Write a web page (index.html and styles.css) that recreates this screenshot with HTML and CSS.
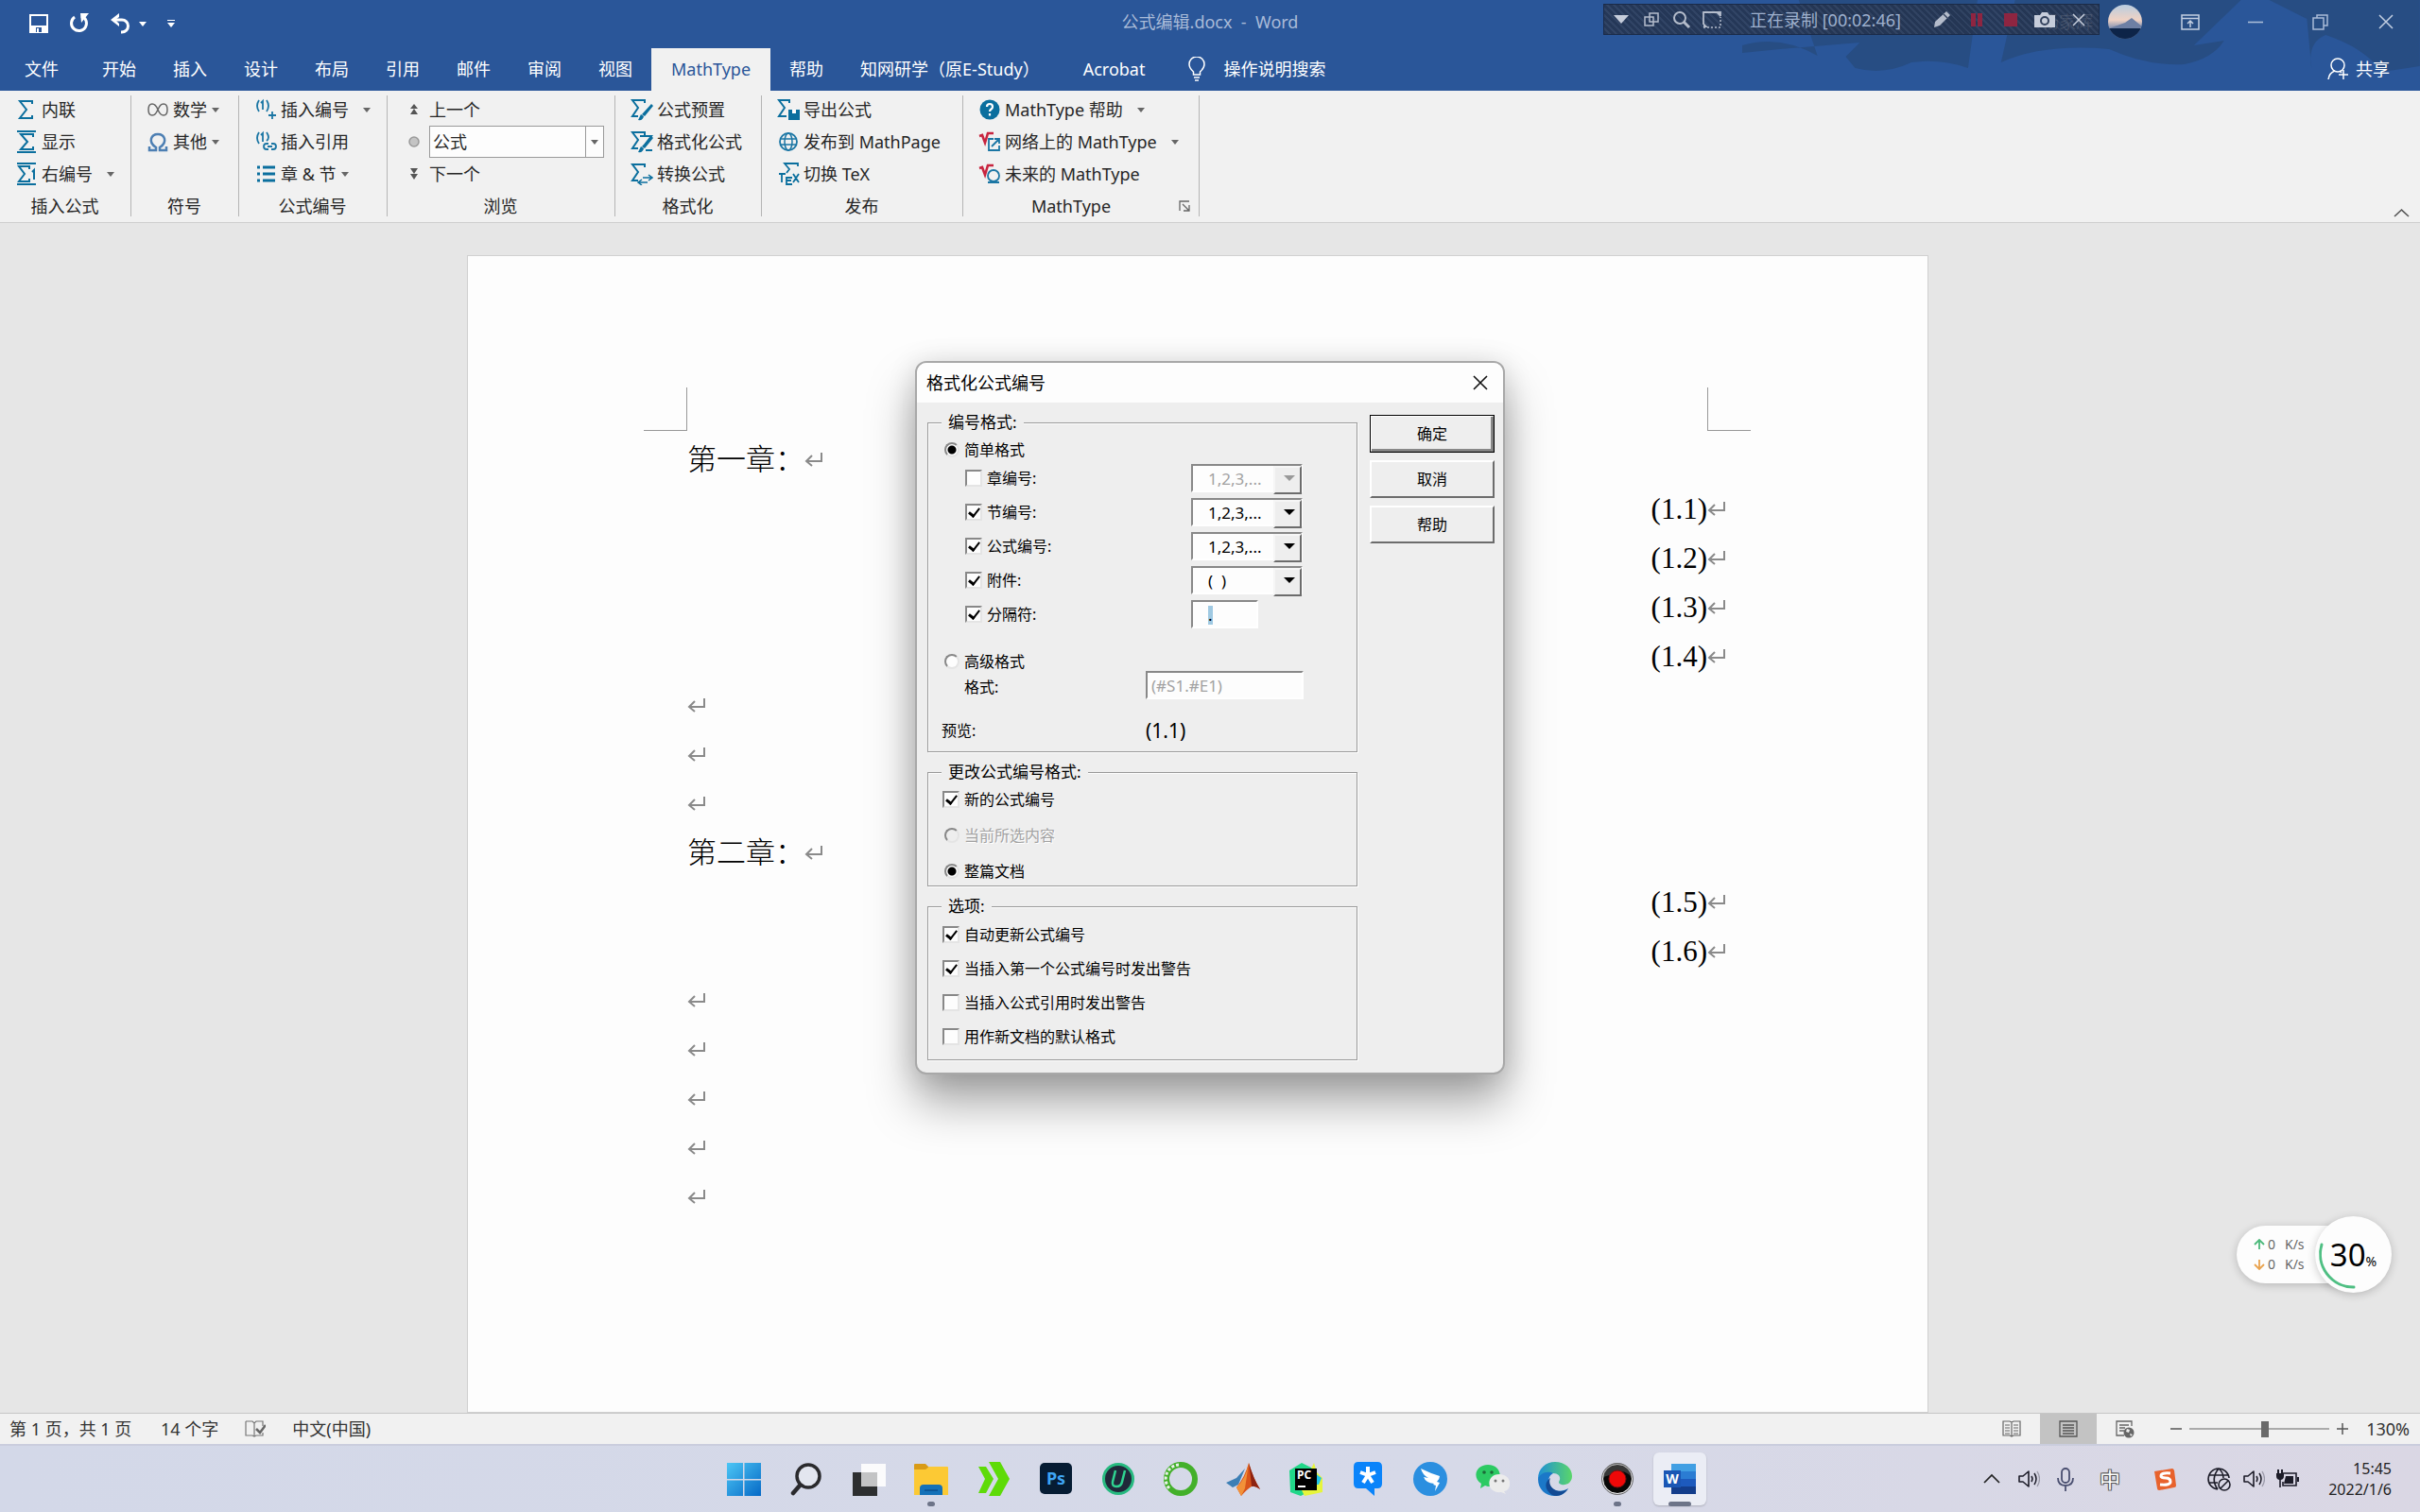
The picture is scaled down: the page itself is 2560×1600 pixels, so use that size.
FILE: index.html
```html
<!DOCTYPE html>
<html lang="zh-CN">
<head>
  <meta charset="UTF-8" />
  <meta name="viewport" content="width=device-width, initial-scale=1.0" />
  <title>公式编辑.docx - Word</title>
  <link rel="stylesheet" href="styles.css">
</head>
<body>
  <svg class="defs" aria-hidden="true">
    <symbol id="sigma" viewBox="0 0 24 24"><path d="M18 6V3H5l7 9-7 9h13v-3" fill="none" stroke="#0b6f9e" stroke-width="2"/></symbol>
    <symbol id="return" viewBox="0 0 20 16"><path d="M18 0v9H2M8 3L2 9l6 5" fill="none" stroke="#8a8a8a" stroke-width="2"/></symbol>
    <symbol id="speaker" viewBox="0 0 24 24"><path d="M2 9v6h4l6 5V4L6 9z" fill="none" stroke="#1c1c28" stroke-width="1.6" stroke-linejoin="round"/><path d="M15 9q2 3 0 6M18 6q4 6 0 12" fill="none" stroke="#1c1c28" stroke-width="1.5"/><path d="M21 4q5 8 0 16" fill="none" stroke="#9a9aa8" stroke-width="1.3"/></symbol>
    <symbol id="root" viewBox="0 0 24 24"><path d="M1 6l3-1 3 8 3-10h6" fill="none" stroke="#c8253f" stroke-width="2.6"/></symbol>
  </svg>

  <header class="top">
    <svg class="clouds" viewBox="0 0 720 96" preserveAspectRatio="none" aria-hidden="true">
      <path d="M0 48Q40 36 80 59L60 0H250L240 72Q210 62 180 66Q150 80 120 72L110 60L125 45L40 52L0 56zM275 66Q320 46 390 52Q430 70 470 68Q500 62 512 43L480 48L530 0H290zM605 72Q600 45 620 37Q660 50 680 76L720 70V0H560L600 20z" fill="#274d83"/>
    </svg>
    <div class="title-row">
      <div class="quick">
        <button aria-label="保存"><svg width="20" height="20" viewBox="0 0 20 20"><path d="M1 1h18v18H1z" fill="none" stroke="#fff" stroke-width="2"/><path d="M1 12h18v7H1z" fill="#fff"/><path d="M7 14h6v5H7z" fill="#2a5699"/><path d="M8 15h2v4H8z" fill="#fff"/></svg></button>
        <button aria-label="重复"><svg width="22" height="22" viewBox="0 0 22 22"><path d="M13 3A8 8 0 1 1 6 4" fill="none" stroke="#fff" stroke-width="3"/><path d="M12 0h9l-8 10z" fill="#fff"/></svg></button>
        <button aria-label="撤消"><svg width="22" height="22" viewBox="0 0 22 22"><path d="M4 7h8a6.500 6.500 0 0 1 0 13h-1" fill="none" stroke="#fff" stroke-width="3"/><path d="M9 0v4L5 7l4 4v3L0 7z" fill="#fff"/></svg><i class="caret light"></i></button>
        <button class="customize" aria-label="自定义快速访问工具栏"><i class="bar"></i><i class="caret light"></i></button>
      </div>
      <div class="doc-name">公式编辑.docx&nbsp; - &nbsp;Word</div>
      <div class="window-side">
        <span class="user">杨家辉</span>
        <svg class="avatar" width="36" height="36" viewBox="0 0 36 36"><defs><linearGradient id="sky" x1="0" y1="0" x2="0" y2="1"><stop offset="0" stop-color="#b9cde0"/><stop offset=".45" stop-color="#f0d2c4"/><stop offset=".7" stop-color="#7f8fb0"/></linearGradient><clipPath id="round"><circle cx="18" cy="18" r="18"/></clipPath></defs><g clip-path="url(#round)"><path d="M0 0h36v36H0z" fill="url(#sky)"/><path d="M4 24l14-5 7-5 11 9v4H0z" fill="#6d7fa4"/><path d="M0 25h36v11H0z" fill="#0d2448"/></g></svg>
        <div class="window-buttons">
          <button aria-label="功能区显示选项"><svg width="20" height="17" viewBox="0 0 20 17"><path d="M1 1h18v15H1zM1 4.500h18M10 14V7M7 10l3-3 3 3" fill="none" stroke="#c3cfe2" stroke-width="1.500"/></svg></button>
          <button aria-label="最小化"><svg width="16" height="16" viewBox="0 0 16 16"><path d="M0 8.500h16" stroke="#a9bbd8" stroke-width="1.600"/></svg></button>
          <button aria-label="还原"><svg width="17" height="17" viewBox="0 0 17 17"><path d="M1 4h11v12H1zM5 4V1h11v11h-4" fill="none" stroke="#a9bbd8" stroke-width="1.500"/></svg></button>
          <button aria-label="关闭"><svg width="16" height="16" viewBox="0 0 16 16"><path d="M1 1l14 14M15 1L1 15" stroke="#c3cfe2" stroke-width="1.500"/></svg></button>
        </div>
      </div>
    </div>
    <nav class="tabs">
      <button class="file">文件</button>
      <button>开始</button>
      <button>插入</button>
      <button>设计</button>
      <button>布局</button>
      <button>引用</button>
      <button>邮件</button>
      <button>审阅</button>
      <button>视图</button>
      <button class="active">MathType</button>
      <button>帮助</button>
      <button>知网研学（原E-Study）</button>
      <button class="wide">Acrobat</button>
      <button class="tell-me"><svg width="18" height="26" viewBox="0 0 18 26"><path d="M5.500 19v-3Q1 12 1 8a8 8 0 0 1 16 0q0 4-4.500 8v3zM6 22h6M7 25h4" fill="none" stroke="#fff" stroke-width="1.500"/></svg>操作说明搜索</button>
      <button class="share"><svg width="23" height="24" viewBox="0 0 23 24"><circle cx="11" cy="8" r="7" fill="none" stroke="#fff" stroke-width="1.500"/><path d="M1 23q1-7 7-9M13 14l2 2M17 13v10M12 18h10" fill="none" stroke="#fff" stroke-width="1.500"/></svg>共享</button>
    </nav>
  </header>

  <section class="recorder" aria-label="录制">
    <button aria-label="菜单"><svg width="16" height="9"><path d="M0 0h16L8 9z" fill="#c6cddb"/></svg></button>
    <button aria-label="窗口"><svg width="16" height="16" viewBox="0 0 16 16"><path d="M6 1h9v9H6zM1 5h9v9H1z" fill="none" stroke="#b4bccb" stroke-width="1.500"/></svg></button>
    <button aria-label="放大"><svg width="20" height="20" viewBox="0 0 20 20"><circle cx="8" cy="8" r="6" fill="none" stroke="#b4bccb" stroke-width="2"/><path d="M12 12l6 6" stroke="#b4bccb" stroke-width="3"/></svg></button>
    <button aria-label="区域"><svg width="20" height="18" viewBox="0 0 20 18"><path d="M1 14V1h13M14 1h5v4" fill="none" stroke="#b4bccb" stroke-width="1.800"/><path d="M1 17h18V6" fill="none" stroke="#b4bccb" stroke-width="1.500" stroke-dasharray="2 2"/><path d="M1 12v5h5zM19 1v5l-5-5z" fill="#b4bccb"/></svg></button>
    <span>正在录制 [00:02:46]</span>
    <button aria-label="画笔"><svg width="20" height="20" viewBox="0 0 20 20"><path d="M1 18l1-6L14 1l4 4L7 16z" fill="#b4bccb"/><path d="M11 4l4 4" stroke="#33425e" stroke-width="1.500"/></svg></button>
    <button aria-label="暂停"><svg width="12" height="14"><path d="M0 0h5v14H0zM7 0h5v14H7z" fill="#8e2541"/></svg></button>
    <button aria-label="停止"><svg width="14" height="14"><path d="M0 0h14v14H0z" fill="#8e2541"/></svg></button>
    <button aria-label="截图"><svg width="22" height="16" viewBox="0 0 22 16"><path d="M0 3h6l2-3h6l2 3h6v13H0z" fill="#c6cddb"/><circle cx="11" cy="9" r="4" fill="none" stroke="#33425e" stroke-width="2"/></svg></button>
    <button aria-label="关闭录制"><svg width="14" height="14" viewBox="0 0 14 14"><path d="M1 1l12 12M13 1L1 13" stroke="#c6cddb" stroke-width="1.500"/></svg></button>
  </section>

  <section class="ribbon">
    <div class="group">
      <button><svg class="icon"><use href="#sigma"/></svg>内联</button>
      <button><svg class="icon" viewBox="0 0 24 24"><path d="M2 1h20M2 23h20M19 7V4H6l7 8-7 8h13v-3" fill="none" stroke="#0b6f9e" stroke-width="2"/></svg>显示</button>
      <button><svg class="icon" viewBox="0 0 24 24"><path d="M2 1h20M2 23h20M15 7V4H4l6 8-6 8h11v-3M18 10l2-2v10" fill="none" stroke="#0b6f9e" stroke-width="2"/></svg>右编号<i class="caret far"></i></button>
      <div class="label">插入公式</div>
    </div>
    <div class="group">
      <button><svg class="icon" viewBox="0 0 24 24"><path d="M12 12C10 7 8 6 6 6q-4 0-4 6t4 6c3 0 4-2 6-6s3-6 6-6q4 0 4 6t-4 6c-2 0-4-1-6-6z" fill="none" stroke="#666" stroke-width="1.500"/></svg>数学<i class="caret"></i></button>
      <button><svg class="icon" viewBox="0 0 24 24"><path d="M3 17v4h7v-3C1 12 5 4 12 4s11 8 2 14v3h7v-4" fill="none" stroke="#4d7fb3" stroke-width="2.500"/></svg>其他<i class="caret"></i></button>
      <div class="label">符号</div>
    </div>
    <div class="group">
      <button><svg class="icon" viewBox="0 0 24 24"><path d="M5 2q-4 6 0 12M13 2q4 6 0 12M7 5l2-2v9M19 14v8M15 18h8" fill="none" stroke="#1b76a4" stroke-width="1.800"/></svg>插入编号<i class="caret far"></i></button>
      <button><svg class="icon" viewBox="0 0 24 24"><path d="M5 2q-4 6 0 12M13 2q4 6 0 9M7 5l2-2v9" fill="none" stroke="#1b76a4" stroke-width="1.800"/><path d="M15 20h-2a3 3 0 0 1 0-6h2M18 14h2a3 3 0 0 1 0 6h-2M14 17h5" fill="none" stroke="#1b76a4" stroke-width="1.800"/></svg>插入引用</button>
      <button><svg class="icon" viewBox="0 0 24 24"><path d="M3 5h3M3 12h3M3 19h3M9 5h13M9 12h13M9 19h13" stroke="#0b6f9e" stroke-width="3"/></svg>章 &amp; 节<i class="caret"></i></button>
      <div class="label">公式编号</div>
    </div>
    <div class="group">
      <button><svg class="icon" viewBox="0 0 24 24"><path d="M12 6l4 5H8zM12 11l4 6H8z" fill="#555"/></svg>上一个</button>
      <div class="browse">
        <svg class="icon" viewBox="0 0 24 24"><circle cx="12" cy="12" r="5" fill="#c4c4c4" stroke="#999" stroke-width="1.500"/></svg>
        <div class="combo">
          <select aria-label="浏览对象"><option>公式</option></select>
        </div>
      </div>
      <button><svg class="icon" viewBox="0 0 24 24"><path d="M8 6h8l-4 6zM8 12h8l-4 6z" fill="#555"/></svg>下一个</button>
      <div class="label">浏览</div>
    </div>
    <div class="group">
      <button><svg class="icon" viewBox="0 0 24 24"><path d="M15 5V2H2l6 8-6 9h6" fill="none" stroke="#0b6f9e" stroke-width="2"/><path d="M22 6l2 2-9 11-3-2zM11 17l3 2q-1 5-6 4z" fill="#0b6f9e"/></svg>公式预置</button>
      <button><svg class="icon" viewBox="0 0 24 24"><path d="M15 5V2H2l6 8-6 9h6M10 6h12l-6 8M16 21h7" fill="none" stroke="#0b6f9e" stroke-width="2"/><path d="M22 6l2 2-9 11-3-2zM11 17l3 2q-1 5-6 4z" fill="#0b6f9e"/></svg>格式化公式</button>
      <button><svg class="icon" viewBox="0 0 24 24"><path d="M15 5V2H2l6 8-6 9h6" fill="none" stroke="#0b6f9e" stroke-width="2"/><path d="M13 16h9M19 13l4 3-4 3M18 21H9M12 18l-4 3 4 3" fill="none" stroke="#0b6f9e" stroke-width="1.500"/></svg>转换公式</button>
      <div class="label">格式化</div>
    </div>
    <div class="group">
      <button><svg class="icon" viewBox="0 0 24 24"><path d="M13 5V2H2l6 8-6 9h8" fill="none" stroke="#0b6f9e" stroke-width="2"/><path d="M12 12h12v11H12z" fill="#0b6f9e"/><path d="M16 12h4v4h-4z" fill="#fff"/></svg>导出公式</button>
      <button><svg class="icon" viewBox="0 0 24 24"><circle cx="12" cy="12" r="9" fill="none" stroke="#1b76a4" stroke-width="1.800"/><ellipse cx="12" cy="12" rx="4" ry="9" fill="none" stroke="#1b76a4" stroke-width="1.500"/><path d="M3 9h18M3 15h18" stroke="#1b76a4" stroke-width="1.500"/></svg>发布到 MathPage</button>
      <button><svg class="icon" viewBox="0 0 24 24"><path d="M22 4V1H8l5 6-3 4M2 12h7M5 12v9M16 16h-6v7h6M10 19h5M17 12l6 9M23 12l-6 9" fill="none" stroke="#0b6f9e" stroke-width="1.800"/></svg>切换 TeX</button>
      <div class="label">发布</div>
    </div>
    <div class="group">
      <button><svg class="icon" viewBox="0 0 24 24"><circle cx="12" cy="12" r="10.500" fill="#0b6f9e"/><path d="M9 9q0-3 3-3t3 3q0 1.500-1.500 2.500T12 14M12 16v2.500" fill="none" stroke="#fff" stroke-width="2.200"/></svg>MathType 帮助<i class="caret far"></i></button>
      <button><svg class="icon" viewBox="0 0 24 24"><use href="#root"/><path d="M16 9h-5v12h11v-5M14 17l7-7M17 9h5v5" fill="none" stroke="#1b76a4" stroke-width="1.800"/></svg>网络上的 MathType<i class="caret far"></i></button>
      <button><svg class="icon" viewBox="0 0 24 24"><use href="#root"/><circle cx="16" cy="14" r="6" fill="#f1f1f1" stroke="#1b76a4" stroke-width="1.800"/><path d="M10 21h12" stroke="#1b76a4" stroke-width="2"/></svg>未来的 MathType</button>
      <div class="label"><span>MathType</span><button class="launcher" aria-label="MathType 选项"><svg width="12" height="12" viewBox="0 0 12 12"><path d="M1 11V1h10M4 4l7 7M11 5v6H5" fill="none" stroke="#666" stroke-width="1.300"/></svg></button></div>
    </div>
    <button class="collapse" aria-label="折叠功能区"><svg width="17" height="10" viewBox="0 0 17 10"><path d="M1 9l7.500-7L16 9" fill="none" stroke="#555" stroke-width="1.600"/></svg></button>
  </section>

  <main class="workspace">
    <article class="page">
      <i class="crop left"></i>
      <i class="crop right"></i>
      <p>第一章：<svg class="mark"><use href="#return"/></svg></p>
      <p class="number">(1.1)<svg class="mark"><use href="#return"/></svg></p>
      <p class="number">(1.2)<svg class="mark"><use href="#return"/></svg></p>
      <p class="number">(1.3)<svg class="mark"><use href="#return"/></svg></p>
      <p class="number">(1.4)<svg class="mark"><use href="#return"/></svg></p>
      <p><svg class="mark"><use href="#return"/></svg></p>
      <p><svg class="mark"><use href="#return"/></svg></p>
      <p><svg class="mark"><use href="#return"/></svg></p>
      <p>第二章：<svg class="mark"><use href="#return"/></svg></p>
      <p class="number">(1.5)<svg class="mark"><use href="#return"/></svg></p>
      <p class="number">(1.6)<svg class="mark"><use href="#return"/></svg></p>
      <p><svg class="mark"><use href="#return"/></svg></p>
      <p><svg class="mark"><use href="#return"/></svg></p>
      <p><svg class="mark"><use href="#return"/></svg></p>
      <p><svg class="mark"><use href="#return"/></svg></p>
      <p><svg class="mark"><use href="#return"/></svg></p>
    </article>
  </main>

  <form class="dialog" role="dialog" aria-labelledby="dialogTitle">
    <div class="dialog-title">
      <span id="dialogTitle">格式化公式编号</span>
      <button type="button" aria-label="关闭"><svg width="16" height="16" viewBox="0 0 16 16"><path d="M1 1l14 14M15 1L1 15" stroke="#111" stroke-width="1.600"/></svg></button>
    </div>
    <div class="dialog-body">
      <div class="fields">
        <fieldset class="format">
          <legend>编号格式:</legend>
          <label class="mode"><input type="radio" name="mode" checked />简单格式</label>
          <div class="row">
            <label><input type="checkbox" />章编号:</label>
            <div class="drop disabled"><select aria-label="章编号格式" disabled><option>1,2,3,...</option></select></div>
          </div>
          <div class="row">
            <label><input type="checkbox" checked />节编号:</label>
            <div class="drop"><select aria-label="节编号格式"><option>1,2,3,...</option></select></div>
          </div>
          <div class="row">
            <label><input type="checkbox" checked />公式编号:</label>
            <div class="drop"><select aria-label="公式编号格式"><option>1,2,3,...</option></select></div>
          </div>
          <div class="row">
            <label><input type="checkbox" checked />附件:</label>
            <div class="drop"><select aria-label="附件格式"><option>(&nbsp; )</option></select></div>
          </div>
          <div class="row">
            <label><input type="checkbox" checked />分隔符:</label>
            <input class="separator" type="text" value="." aria-label="分隔符文本" />
          </div>
          <label class="mode advanced"><input type="radio" name="mode" />高级格式</label>
          <div class="pair">
            <label class="indent" for="pattern">格式:</label>
            <input class="pattern" id="pattern" type="text" value="(#S1.#E1)" disabled />
          </div>
          <div class="pair preview">
            <span>预览:</span>
            <output>(1.1)</output>
          </div>
        </fieldset>
        <fieldset class="change">
          <legend>更改公式编号格式:</legend>
          <label><input type="checkbox" checked />新的公式编号</label>
          <label class="off"><input type="radio" name="scope" disabled />当前所选内容</label>
          <label><input type="radio" name="scope" checked />整篇文档</label>
        </fieldset>
        <fieldset class="options">
          <legend>选项:</legend>
          <label><input type="checkbox" checked />自动更新公式编号</label>
          <label><input type="checkbox" checked />当插入第一个公式编号时发出警告</label>
          <label><input type="checkbox" />当插入公式引用时发出警告</label>
          <label><input type="checkbox" />用作新文档的默认格式</label>
        </fieldset>
      </div>
      <div class="actions">
        <button type="button" class="default">确定</button>
        <button type="button">取消</button>
        <button type="button">帮助</button>
      </div>
    </div>
  </form>

  <aside class="monitor">
    <div class="speed">
      <div><svg width="12" height="12" viewBox="0 0 12 12"><path d="M6 11V1M1 6l5-5 5 5" fill="none" stroke="#4cb97a" stroke-width="1.800"/></svg><span>0</span><span>K/s</span></div>
      <div><svg width="12" height="12" viewBox="0 0 12 12"><path d="M6 1v10M1 6l5 5 5-5" fill="none" stroke="#e9a24d" stroke-width="1.800"/></svg><span>0</span><span>K/s</span></div>
    </div>
    <div class="gauge">
      <svg width="81" height="81" viewBox="0 0 81 81"><path d="M7 30A35 35 0 0 0 41 75" fill="none" stroke="#4fbf83" stroke-width="3" stroke-linecap="round"/></svg>
      <b>30</b><small>%</small>
    </div>
  </aside>

  <footer class="status">
    <span class="pages">第 1 页，共 1 页</span>
    <span>14 个字</span>
    <button aria-label="校对"><svg width="22" height="18" viewBox="0 0 22 18"><path d="M1 1h7l2 2 2-2h7v5M10 3v14M1 1v15h7l2 1 2-1h7v-3" fill="none" stroke="#777" stroke-width="1.200"/><path d="M12 9l4 4 6-8" fill="none" stroke="#666" stroke-width="2.500"/></svg></button>
    <span>中文(中国)</span>
    <div class="views">
      <button aria-label="阅读视图"><svg width="20" height="18" viewBox="0 0 20 18"><path d="M1 1h7l2 1 2-1h7v15h-7l-2 1-2-1H1zM10 2v15M3 5h5M3 8h5M3 11h5M3 14h5M12 5h5M12 8h5M12 11h5M12 14h5" fill="none" stroke="#666" stroke-width="1.200"/></svg></button>
      <button class="current" aria-label="页面视图"><svg width="20" height="18" viewBox="0 0 20 18"><path d="M1 1h18v16H1zM4 5h12M4 8h12M4 11h12M4 14h12" fill="none" stroke="#555" stroke-width="1.300"/></svg></button>
      <button aria-label="Web 版式视图"><svg width="20" height="19" viewBox="0 0 20 19"><path d="M17 6V1H1v15h8M4 5h10M4 8h6M4 11h5" fill="none" stroke="#666" stroke-width="1.300"/><circle cx="14" cy="13" r="5.500" fill="#666"/><path d="M12 9l3 1-1 3-3-1zM15 14l3 1-2 2z" fill="#eee"/></svg></button>
    </div>
    <div class="zoom">
      <button aria-label="缩小"><svg width="12" height="12"><path d="M0 6h12" stroke="#555" stroke-width="1.500"/></svg></button>
      <input type="range" min="0" max="100" value="54" aria-label="显示比例" />
      <button aria-label="放大"><svg width="12" height="12"><path d="M0 6h12M6 0v12" stroke="#555" stroke-width="1.500"/></svg></button>
      <span>130%</span>
    </div>
  </footer>

  <footer class="taskbar">
    <div></div>
    <div class="apps">
      <button aria-label="开始"><svg viewBox="0 0 36 36"><defs><linearGradient id="win" x1="0" y1="0" x2="1" y2="1"><stop offset="0" stop-color="#4cc6f5"/><stop offset="1" stop-color="#0669c6"/></linearGradient></defs><path d="M0 1h17v17H0zM18.500 1H36v17H18.500zM0 19.500h17V36H0zM18.500 19.500H36V36H18.500z" fill="url(#win)"/></svg></button>
      <button aria-label="搜索"><svg viewBox="0 0 36 36"><circle cx="20" cy="15" r="12" fill="#e3e6ef" stroke="#2a2a2d" stroke-width="3.500"/><path d="M11 25l-7 8" stroke="#2a2a2d" stroke-width="4.500" stroke-linecap="round"/></svg></button>
      <button aria-label="任务视图"><svg viewBox="0 0 36 36"><path d="M1 11h26v25H1z" fill="#2d2f30"/><path d="M10 2h26v24H10z" fill="#fbfbfc"/><path d="M10 11h17v15H10z" fill="#c3c4c5"/></svg></button>
      <button class="running" aria-label="文件资源管理器"><svg viewBox="0 0 36 36"><path d="M0 3q0-1 1-1h11l4 4v5H0z" fill="#d99b17"/><path d="M0 8h12l4-3h19q1 0 1 1v29H0z" fill="#fcc934"/><path d="M6 35v-7q0-4 4-4h16q4 0 4 4v7z" fill="#1471b8"/><path d="M11 30h14" stroke="#0a4f8e" stroke-width="1.500"/></svg></button>
      <button aria-label="加速器"><svg viewBox="0 0 36 36"><path d="M2 5h8l8 13-8 15H2l7-15zM13 0h12l10 18-10 18H13l10-18z" fill="#5edb08"/></svg></button>
      <button aria-label="Photoshop"><svg viewBox="0 0 36 36"><rect x="1" y="1" width="34" height="33" rx="5" fill="#061c33"/><text x="18" y="24" text-anchor="middle" font-size="18" font-weight="700" fill="#3ea5f5">Ps</text></svg></button>
      <button aria-label="卸载工具"><svg viewBox="0 0 36 36"><circle cx="18" cy="18" r="15.500" fill="#20293a" stroke="#27ba80" stroke-width="3"/><path d="M15 9l-3 12q-1 5 4 5t6-5l3-12" fill="none" stroke="#2fd391" stroke-width="2.500"/></svg></button>
      <button aria-label="Anaconda"><svg viewBox="0 0 36 36"><circle cx="18" cy="18" r="15" fill="none" stroke="#43b02a" stroke-width="6"/><path d="M16 3A15 15 0 0 0 7 29" fill="none" stroke="#e9f0ea" stroke-width="3" stroke-dasharray="3 2"/></svg></button>
      <button aria-label="MATLAB"><svg viewBox="0 0 36 36"><path d="M0 22l11-5 9-10-7 17-6 3z" fill="#3d7fb5"/><path d="M11 27Q20 16 24 1q5 17 12 28-6-4-9-3-5 3-11 10z" fill="#d9541a"/><path d="M24 1q5 17 12 28-6-4-9-3-1-12-3-25z" fill="#8e2311"/><path d="M11 27q10-9 13-26l-4 27-4 8z" fill="#f29239"/></svg></button>
      <button aria-label="PyCharm"><svg viewBox="0 0 36 36"><path d="M1 9l13-8 12 6v22l-13 7-11-4z" fill="#21d789"/><path d="M24 7l3-6 3 10 6 6v15l-19 4-4-8z" fill="#e6f53c"/><path d="M25 10l10 7-3 7-7 0z" fill="#22c4e8"/><path d="M7 7h23v23H7z" fill="#000"/><text x="9" y="18" font-size="12" font-weight="700" fill="#fff">PC</text><path d="M10 26h8" stroke="#fff" stroke-width="2"/></svg></button>
      <button aria-label="TIM"><svg viewBox="0 0 36 36"><path d="M8 0h20q5 0 5 5v18q0 5-5 5h-3v8l-9-8H8q-5 0-5-5V5q0-5 5-5z" fill="#0a84fa"/><path d="M18 5v9M18 14l-8-3M18 14l8-3M18 14l-5 8M18 14l5 8" stroke="#fff" stroke-width="4"/></svg></button>
      <button aria-label="钉钉"><svg viewBox="0 0 36 36"><circle cx="18" cy="18" r="18" fill="#2b8fe0"/><path d="M8 7q10 5 20 8 0 3-3 6l3 1-5 9 1-6-3-1 1-1q-9-1-11-7l5 1q-6-3-8-10z" fill="#fff"/></svg></button>
      <button aria-label="微信"><svg viewBox="0 0 36 36"><path d="M13 3c17 0 17 23 0 23l-3-1-5 3 1-5C-4 17 0 3 13 3z" fill="#2cca63"/><circle cx="9" cy="11" r="1.800" fill="#1c6a38"/><circle cx="17" cy="11" r="1.800" fill="#1c6a38"/><path d="M25 13c14 0 14 17 5 18l2 3-5-2c-16 2-17-19-2-19z" fill="#ececec"/><circle cx="21" cy="20" r="1.500" fill="#777"/><circle cx="29" cy="20" r="1.500" fill="#777"/></svg></button>
      <button aria-label="Edge"><svg viewBox="0 0 36 36"><defs><linearGradient id="edge"><stop offset="0" stop-color="#1f8fd6"/><stop offset="1" stop-color="#5ad66a"/></linearGradient></defs><path d="M0 18C0 7 8 0 18 0c11 0 18 7 18 15 0 7-6 10-11 9-4-1-3-3-2-5 1-4-2-7-7-7C8 12 2 16 0 18z" fill="url(#edge)"/><path d="M0 18c2-6 10-9 16-6-4 2-6 7-4 12 3 7 12 9 20 4-3 5-8 8-14 8C8 36 0 29 0 18z" fill="#1b78c8"/><path d="M13 17c-3 7 3 14 11 14 4 0 7-2 8-3-5 8-12 9-17 7-8-5-9-13-2-18z" fill="#124a94"/></svg></button>
      <button class="running" aria-label="录屏"><svg viewBox="0 0 36 36"><circle cx="18" cy="18" r="15.500" fill="#080808" stroke="#fff" stroke-width="1"/><path d="M3 16A15 15 0 0 1 33 16q-7-8-15-5T3 16z" fill="#666" opacity=".5"/><circle cx="18" cy="18" r="16.500" fill="none" stroke="#666" stroke-width="1"/><circle cx="18" cy="18" r="9" fill="#f00808" stroke="#711" stroke-width="1"/></svg></button>
      <button class="running focused" aria-label="Word"><svg viewBox="0 0 36 36"><path d="M9 2h26v8H9z" fill="#419fe3"/><path d="M9 10h26v8H9z" fill="#2b7cd3"/><path d="M9 18h26v8H9z" fill="#1d5abd"/><path d="M9 26h26v8H9z" fill="#133d8b"/><path d="M1 9h18v18H1z" fill="#1a56b4"/><text x="10" y="23" text-anchor="middle" font-size="14" font-weight="700" fill="#fff">W</text></svg></button>
    </div>
    <div class="tray">
      <button aria-label="显示隐藏的图标"><svg width="18" height="12" viewBox="0 0 18 12"><path d="M1 10l8-8 8 8" fill="none" stroke="#222" stroke-width="1.700"/></svg></button>
      <button aria-label="声音"><svg width="24" height="24"><use href="#speaker"/></svg></button>
      <button class="mic" aria-label="麦克风"><svg width="18" height="25" viewBox="0 0 18 25"><rect x="5" y="1" width="8" height="15" rx="4" fill="none" stroke="#4a4f70" stroke-width="1.800"/><path d="M1 11q0 8 8 8t8-8M9 19v6" fill="none" stroke="#4a4f70" stroke-width="1.800"/></svg></button>
      <button class="ime">中</button>
      <button class="sogou" aria-label="搜狗输入法"><svg width="24" height="24" viewBox="0 0 24 24"><path d="M1 4l19-3q1 0 2 2l2 16q0 2-2 2L6 24q-2 0-2-2z" fill="#e8622c"/><path d="M18 6q-10-1-10 3 0 2 5 2t5 4q0 4-11 3" fill="none" stroke="#fff" stroke-width="3"/></svg></button>
      <div class="system">
        <svg width="25" height="25" viewBox="0 0 25 25"><path d="M11 23A11 11 0 1 1 23 11M12 1q-9 11-1 22M12 1q5 4 5 10M2 8h20M2 16h9" fill="none" stroke="#1c1c28" stroke-width="1.600"/><circle cx="18" cy="18" r="6" fill="none" stroke="#1c1c28" stroke-width="1.600"/><path d="M14 22l8-8" stroke="#1c1c28" stroke-width="1.600"/></svg>
        <svg width="24" height="24"><use href="#speaker"/></svg>
        <svg width="24" height="20" viewBox="0 0 24 20"><path d="M7 4h14v13H7v-4M4 10v9" fill="none" stroke="#1c1c28" stroke-width="1.600"/><path d="M10 7h8v8H8zM22 8h2v5h-2zM0 4h8v3q0 4-4 4T0 7zM1 0h2v4H1zM5 0h2v4H5z" fill="#1c1c28"/></svg>
      </div>
      <time>15:45<br>2022/1/6</time>
    </div>
  </footer>
</body>
</html>
```
FILE: styles.css
```css
* {
  box-sizing: border-box;
}
body {
  margin: 0;
  height: 100vh;
  display: flex;
  flex-direction: column;
  position: relative;
  overflow: hidden;
  font-family: "Noto Sans", "Noto Sans CJK SC", sans-serif;
  font-size: 18px;
  line-height: 24px;
  color: #262626;
  background: #e6e6e6;
}
button, input, select {
  font: inherit;
  color: inherit;
}
button {
  padding: 0;
  border: 0;
  background: none;
  display: flex;
  align-items: center;
  white-space: nowrap;
}
svg {
  flex: none;
  display: block;
}
.defs {
  position: absolute;
  width: 0;
  height: 0;
}
.caret {
  margin-left: 5px;
  border: 4px solid transparent;
  border-top: 5px solid #666;
  border-bottom: 0;
}
.caret.far {
  margin-left: 15px;
}
.caret.light {
  border-top-color: #fff;
}

/* title bar and tabs */
.top {
  position: relative;
  background: #2a5699;
  color: #fff;
}
.clouds {
  position: absolute;
  top: 0;
  right: 0;
  width: 28%;
  height: 100%;
}
.title-row {
  position: relative;
  height: 51px;
  padding-bottom: 5px;
  display: grid;
  grid-template-columns: 1fr auto 1fr;
  align-items: center;
}
.quick {
  display: flex;
  align-items: center;
  gap: 22px;
  padding: 4px 0 0 31px;
}
.quick .caret {
  margin-left: 8px;
}
.customize {
  flex-direction: column;
  gap: 2px;
}
.customize .caret {
  margin: 0;
}
.bar {
  width: 8px;
  height: 1px;
  background: #fff;
}
.doc-name {
  color: #a9bbd8;
}
.window-side {
  display: flex;
  align-items: center;
  justify-content: flex-end;
  gap: 16px;
  padding-right: 2px;
}
.user {
  color: #d5deec;
}
.window-buttons {
  display: flex;
}
.window-buttons button {
  width: 69px;
  height: 40px;
  justify-content: center;
}
.tabs {
  position: relative;
  display: flex;
  gap: 1px;
  height: 45px;
}
.tabs button {
  padding: 0 19px 2px;
}
.tabs .file {
  padding: 0 26px 2px;
}
.tabs .active {
  padding: 0 21px 2px;
  background: #f1f1f1;
  color: #2a5699;
}
.tabs .wide {
  padding: 0 26px 2px;
}
.tell-me {
  gap: 19px;
}
.tabs .share {
  margin-left: auto;
  padding-right: 32px;
  gap: 7px;
}

/* floating screen recorder bar */
.recorder {
  position: absolute;
  top: 4px;
  right: 339px;
  height: 33px;
  width: 525px;
  padding-left: 2px;
  display: flex;
  align-items: center;
  border: 1px solid #1b2b48;
  color: #9eb0cd;
  background: repeating-linear-gradient(45deg, rgba(36, 50, 76, 0.85) 0 3px, rgba(50, 65, 92, 0.85) 3px 5px);
}
.recorder button {
  width: 32px;
  justify-content: center;
}
.recorder span {
  padding: 0 26px 0 24px;
  white-space: nowrap;
}
.recorder span ~ button {
  width: 36px;
}

/* ribbon */
.ribbon {
  display: grid;
  grid-template-columns: 139px 114px 157px 241px 155px 213px 250px 1fr;
  height: 140px;
  padding-top: 3px;
  background: #f1f1f1;
  border-bottom: 1px solid #cfcfcf;
}
.group {
  display: grid;
  grid-template-rows: 34px 34px 34px 34px;
  padding-left: 16px;
  background: linear-gradient(#b5b5b5, #b5b5b5) right 2px / 1px 128px no-repeat;
}
.icon {
  width: 24px;
  height: 24px;
  margin-right: 4px;
}
.label {
  grid-row: 4;
  margin-left: -16px;
  display: flex;
  align-items: center;
  justify-content: center;
  padding-right: 2px;
}
.label span {
  flex: 1;
  text-align: center;
}
.launcher {
  width: 20px;
  height: 18px;
}
.browse {
  display: flex;
  align-items: center;
}
.combo {
  position: relative;
  flex: 1;
  margin-right: 12px;
}
.combo::after {
  content: "";
  position: absolute;
  top: 15px;
  right: 6px;
  border: 4px solid transparent;
  border-top: 5px solid #666;
  border-bottom: 0;
}
.combo select {
  display: block;
  width: 100%;
  height: 34px;
  padding: 0 3px;
  appearance: none;
  border: 1px solid #9a9a9a;
  border-radius: 0;
  background: linear-gradient(#9a9a9a, #9a9a9a) right 18px top / 1px 100% no-repeat #fdfdfd;
}
.collapse {
  align-self: end;
  justify-self: end;
  margin: 0 11px 5px;
}

/* document */
.workspace {
  flex: 1;
  min-height: 0;
  overflow: hidden;
  padding: 34px 26px 0 0;
}
.page {
  position: relative;
  width: 1546px;
  max-width: 100%;
  min-height: 100%;
  margin: 0 auto;
  padding: 190px 233px 0 232px;
  border: 1px solid #d0d0d0;
  background: #fdfdfd;
  color: #000;
  font-family: "Liberation Serif", "Noto Sans CJK SC", serif;
  font-size: 31px;
  font-weight: 300;
}
.page p {
  display: flex;
  align-items: center;
  height: 52px;
  margin: 0;
  line-height: 52px;
}
.page .number {
  justify-content: flex-end;
  margin-right: -20px;
}
.mark {
  width: 20px;
  height: 16px;
}
.crop {
  position: absolute;
  top: 139px;
  width: 46px;
  height: 46px;
  border-bottom: 1px solid #999;
}
.crop.left {
  left: 186px;
  border-right: 1px solid #999;
}
.crop.right {
  right: 187px;
  border-left: 1px solid #999;
}

/* equation number dialog */
.dialog {
  position: absolute;
  top: 382px;
  left: 50%;
  width: 624px;
  margin-left: -312px;
  border: 2px solid #a8a8a8;
  border-radius: 12px;
  overflow: hidden;
  background: #eee;
  color: #000;
  font-size: 16px;
  box-shadow: 0 30px 50px rgba(0, 0, 0, 0.34), 0 4px 30px rgba(0, 0, 0, 0.14);
}
.dialog-title {
  display: flex;
  align-items: center;
  justify-content: space-between;
  height: 42px;
  padding: 0 16px 0 10px;
  background: #fdfdfd;
  font-size: 18px;
}
.dialog-body {
  display: grid;
  grid-template-columns: 1fr 132px;
  gap: 13px;
  padding: 9px 9px 13px 11px;
}
.fields {
  display: grid;
  gap: 9px;
}
fieldset {
  min-width: 0;
  margin: 0;
  padding: 0 0 0 14px;
  border: 1px solid #999;
  box-shadow: 1px 1px #fff, inset 1px 1px #fff;
}
legend {
  padding: 0 7px;
  background: #eee;
  font-size: 17px;
  line-height: 24px;
}
fieldset label {
  display: flex;
  align-items: center;
}
input[type="checkbox"], input[type="radio"] {
  appearance: none;
  flex: none;
  width: 18px;
  height: 18px;
  margin: 0 5px 0 1px;
  border: 2px solid;
  border-color: #888 #e4e4e4 #e4e4e4 #888;
  background: #fdfdfd;
}
input[type="radio"] {
  width: 16px;
  height: 16px;
  margin: 0 5px 0 3px;
  border-radius: 50%;
}
input[type="radio"]:checked {
  background: radial-gradient(circle, #000 4px, #fdfdfd 5px);
}
input[type="checkbox"]:checked::before {
  content: "";
  display: block;
  width: 5px;
  height: 9px;
  margin: 0 0 0 4px;
  border: solid #000;
  border-width: 0 2px 3px 0;
  transform: rotate(38deg);
}
.format {
  padding-top: 4px;
  padding-bottom: 7px;
}
.mode {
  height: 25px;
}
.advanced {
  height: 20px;
  margin-top: 22px;
}
.row {
  display: grid;
  grid-template-columns: 240px 118px;
  align-items: center;
  height: 36px;
  padding-left: 24px;
}
.drop {
  position: relative;
}
.drop select, .separator, .pattern {
  height: 30px;
  border: 2px solid;
  border-color: #888 #fff #fff #888;
  border-radius: 0;
  background: #fdfdfd;
  font-size: 17px;
  line-height: 24px;
}
.drop select {
  display: block;
  width: 100%;
  padding: 2px 0 0 16px;
  appearance: none;
  opacity: 1;
}
.drop::before {
  content: "";
  position: absolute;
  top: 2px;
  right: 1px;
  width: 26px;
  height: 26px;
  border: 2px solid;
  border-color: #f6f6f6 #6c6c6c #6c6c6c #f6f6f6;
  background: #eee;
  pointer-events: none;
}
.drop::after {
  content: "";
  position: absolute;
  top: 12px;
  right: 8px;
  border: 6px solid transparent;
  border-top-color: #000;
  border-bottom: 0;
}
.drop.disabled select {
  color: #a2a2a2;
}
.drop.disabled::after {
  border-top-color: #999;
}
.separator {
  width: 71px;
  padding: 0 16px;
  background: linear-gradient(#9fc9e2, #9fc9e2) 16px 4px / 5px 20px no-repeat #fdfdfd;
}
.pair {
  display: grid;
  grid-template-columns: 216px 167px;
  align-items: center;
  height: 30px;
}
.indent {
  padding: 4px 0 0 24px;
}
.pattern {
  width: 100%;
  padding: 0 4px;
  color: #a2a2a2;
}
.preview {
  margin-top: 18px;
}
.preview output {
  font-size: 21px;
}
.change {
  padding-top: 2px;
}
.change label {
  height: 30px;
}
.change label + label {
  margin-top: 8px;
}
.off {
  color: #a2a2a2;
  text-shadow: 1px 1px #fff;
}
.off input[type="radio"] {
  background: #eee;
}
.options {
  padding-bottom: 6px;
}
.options label {
  height: 36px;
}
.actions {
  display: flex;
  flex-direction: column;
  gap: 8px;
  padding-top: 4px;
}
.actions button {
  height: 40px;
  justify-content: center;
  border: 2px solid;
  border-color: #fff #6c6c6c #6c6c6c #fff;
  background: #eee;
}
.actions .default {
  border-color: #fff #777 #777 #fff;
  outline: 1px solid #000;
  outline-offset: -1px;
  box-shadow: inset -2px -2px #888;
}

/* network monitor */
.monitor {
  position: absolute;
  right: 30px;
  bottom: 232px;
  display: flex;
  align-items: center;
}
.speed {
  width: 110px;
  height: 61px;
  margin-right: -27px;
  padding: 9px 0 0 18px;
  border-radius: 31px 0 0 31px;
  background: #fdfdfd;
  box-shadow: 0 2px 10px rgba(0, 0, 0, 0.2);
  color: #666;
  font-size: 14px;
  line-height: 21px;
}
.speed div {
  display: flex;
  align-items: center;
}
.speed span {
  width: 18px;
  margin-left: 3px;
  white-space: nowrap;
}
.speed span + span {
  margin-left: 0;
}
.gauge {
  position: relative;
  display: flex;
  align-items: baseline;
  justify-content: center;
  width: 81px;
  height: 81px;
  border-radius: 50%;
  background: #fdfdfd;
  box-shadow: 0 2px 10px rgba(0, 0, 0, 0.2);
  color: #000;
  line-height: 81px;
}
.gauge svg {
  position: absolute;
  top: 0;
  left: 0;
}
.gauge b {
  font-size: 33px;
  font-weight: 400;
}
.gauge small {
  font-size: 14px;
}

/* status bar */
.status {
  display: flex;
  align-items: center;
  height: 33px;
  padding: 0 11px 0 10px;
  gap: 28px;
  border-top: 1px solid #c6c6c6;
  background: #f1f1f1;
  color: #333;
}
.pages {
  min-width: 132px;
}
.views {
  display: flex;
  align-self: stretch;
  margin-left: auto;
}
.views button {
  width: 60px;
  justify-content: center;
}
.views .current {
  background: #c3c3c3;
}
.zoom {
  display: flex;
  align-items: center;
  gap: 8px;
  margin-left: -10px;
}
.zoom span {
  margin-left: 11px;
}
.zoom input {
  appearance: none;
  width: 148px;
  height: 18px;
  margin: 0;
  background: linear-gradient(#ababab, #ababab) center / 100% 2px no-repeat;
}
.zoom input::-webkit-slider-thumb {
  appearance: none;
  width: 8px;
  height: 17px;
  background: #6a6a6a;
}

/* taskbar */
.taskbar {
  display: grid;
  grid-template-columns: 1fr auto 1fr;
  align-items: center;
  height: 72px;
  background: linear-gradient(90deg, #d3d8e8, #d6d9e8 60%, #dad7e4);
  border-top: 2px solid #cacddd;
}
.apps {
  display: flex;
  gap: 10px;
  padding-left: 3px;
}
.apps button {
  position: relative;
  width: 56px;
  height: 56px;
  justify-content: center;
  border-radius: 6px;
}
.apps svg {
  width: 36px;
  height: 36px;
}
.running::after {
  content: "";
  position: absolute;
  bottom: -1px;
  left: 24px;
  width: 8px;
  height: 5px;
  border-radius: 3px;
  background: #6d7488;
}
.apps .focused {
  background: #ebedf5;
  box-shadow: 0 1px 2px rgba(0, 0, 0, 0.2);
}
.focused::after {
  left: 16px;
  width: 24px;
}
.tray {
  display: flex;
  align-items: center;
  justify-content: flex-end;
  padding-right: 30px;
  gap: 18px;
  color: #222;
}
.tray .ime {
  padding: 0 5px 0 9px;
  font-size: 22px;
  color: #fff;
  text-shadow: 1px 1px #555, -1px -1px #555, 1px -1px #555, -1px 1px #555;
}
.sogou {
  margin: 0 15px 0 12px;
}
.system {
  display: flex;
  align-items: center;
  gap: 12px;
}
.tray time {
  width: 80px;
  font-size: 16px;
  line-height: 22px;
  text-align: right;
}
```
